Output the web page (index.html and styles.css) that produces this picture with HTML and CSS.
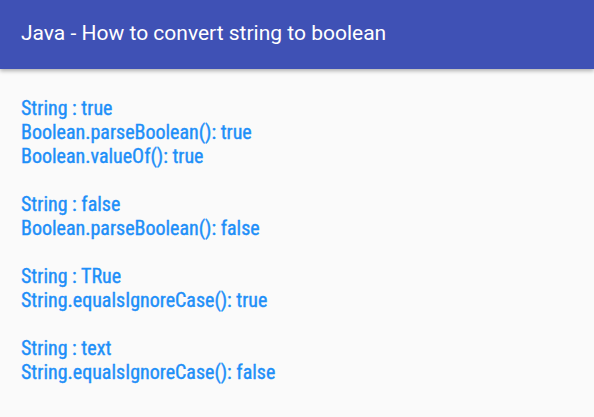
FILE: index.html
```html
<!DOCTYPE html>
<html>
<head>
<meta charset="utf-8">
<link rel="stylesheet" href="styles.css">
</head>
<body>
<header class="appbar">
  <h1 class="title">Java - How to convert string to boolean</h1>
</header>
<main class="content">
  <p class="line">String : true</p>
  <p class="line">Boolean.parseBoolean(): true</p>
  <p class="line">Boolean.valueOf(): true</p>
  <p class="line blank">&nbsp;</p>
  <p class="line">String : false</p>
  <p class="line">Boolean.parseBoolean(): false</p>
  <p class="line blank">&nbsp;</p>
  <p class="line">String : TRue</p>
  <p class="line">String.equalsIgnoreCase(): true</p>
  <p class="line blank">&nbsp;</p>
  <p class="line">String : text</p>
  <p class="line">String.equalsIgnoreCase(): false</p>
</main>
</body>
</html>
```
FILE: styles.css
```css
html, body {
  margin: 0;
  padding: 0;
  height: 100%;
}
body {
  background: #fafafa;
  font-family: Roboto, "Liberation Sans", sans-serif;
}
.appbar {
  height: 69px;
  background: #3f51b5;
  box-shadow: 0 2px 4px rgba(0, 0, 0, 0.3);
  display: flex;
  align-items: center;
  padding: 0 21px 3px;
  box-sizing: border-box;
  position: relative;
}
.title {
  margin: 0;
  color: #fff;
  font-size: 21px;
  font-weight: 400;
  line-height: 24px;
}
.content {
  padding: 27px 21px;
}
.line {
  margin: 0;
  font-family: "Roboto Condensed", Roboto, sans-serif;
  font-stretch: condensed;
  font-weight: 400;
  font-size: 20px;
  line-height: 24px;
  color: #1e8ff8;
  -webkit-text-stroke: 0.4px #1e8ff8;
  white-space: pre;
}
```
